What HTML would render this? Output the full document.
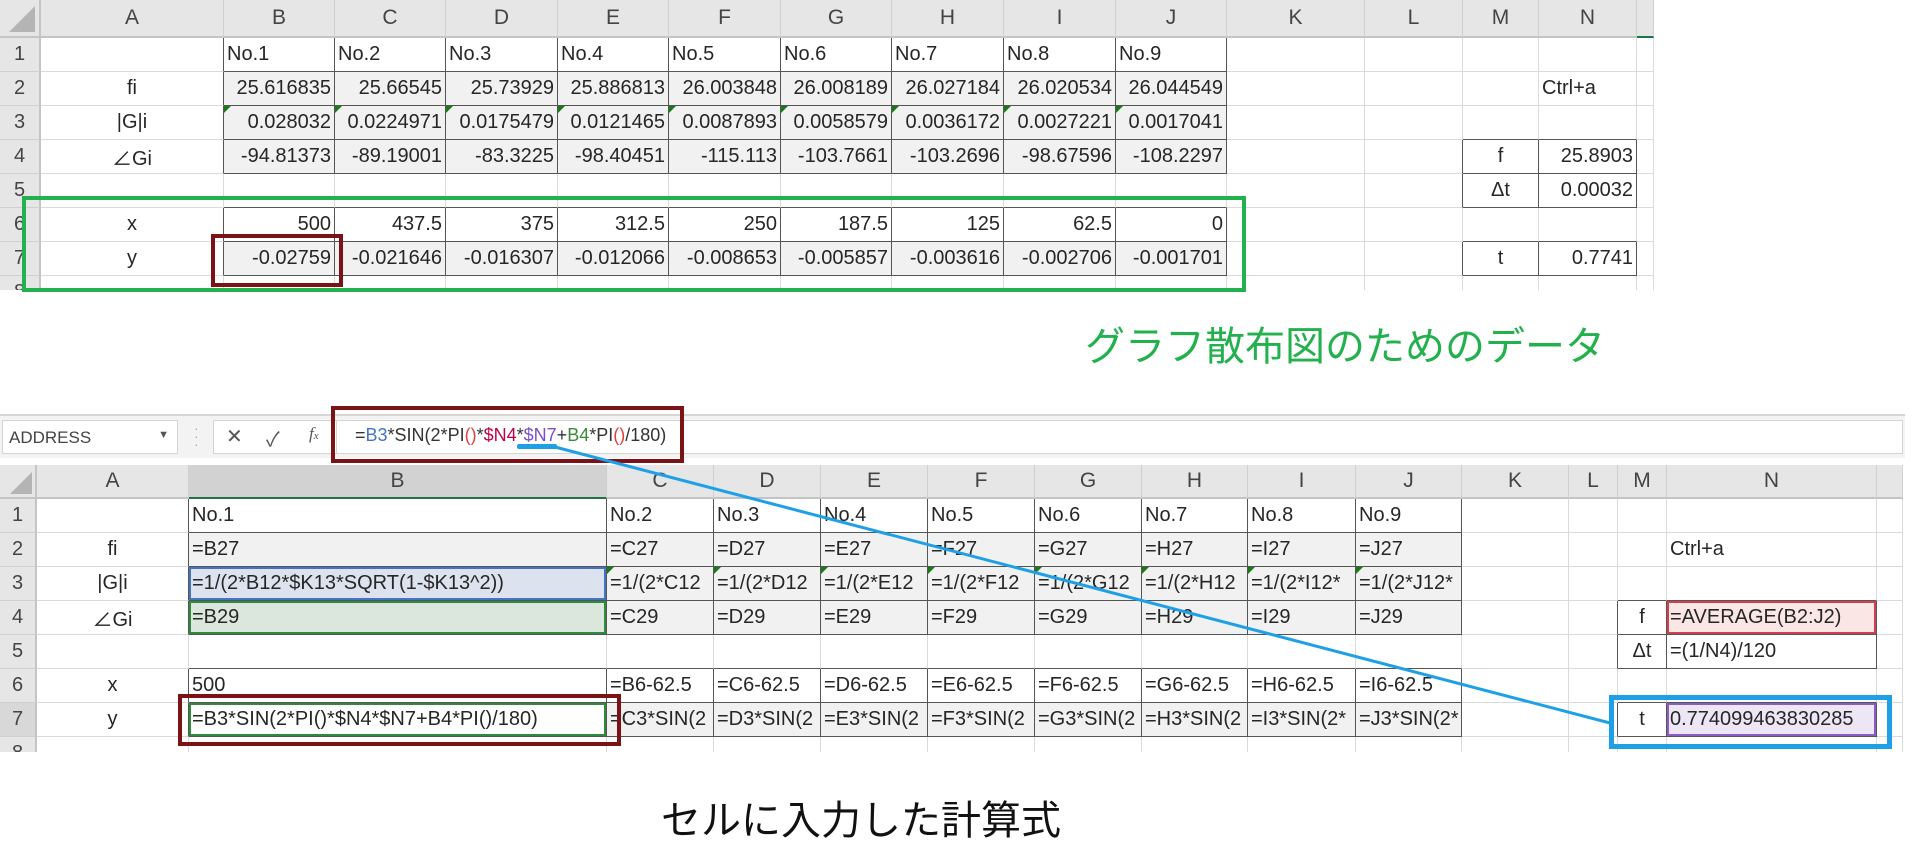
<!DOCTYPE html>
<html><head><meta charset="utf-8"><style>
*{margin:0;padding:0}
body{width:1920px;height:858px;background:#fff;position:relative;overflow:hidden;font-family:"Liberation Sans","Noto Sans CJK JP",sans-serif;color:#262626}
.g{position:absolute;left:0;overflow:hidden}
table{border-collapse:separate;border-spacing:0;table-layout:fixed}
td{box-sizing:border-box;border-right:1px solid #dadada;border-bottom:1px solid #dadada;height:34px;font-size:20px;white-space:nowrap;overflow:hidden;padding:0 3px;vertical-align:middle}
tr.h td{background:#e6e6e6;color:#444;text-align:center;border-bottom:2px solid #c4c4c4;border-right:1px solid #d0d0d0;font-size:21px}
td.n{background:#e6e6e6;color:#444;text-align:center;border-right:2px solid #c4c4c4;border-bottom:1px solid #d0d0d0;padding:0}
.r{text-align:right}.c{text-align:center}
.d{border-right:1px solid #555;border-bottom:1px solid #555}
.dr{border-right:1px solid #555}.db{border-bottom:1px solid #555}
.gy{background:#f1f1f1}
.t{position:relative}
.t:before{content:"";position:absolute;left:0;top:0;border-top:7px solid #1a7a1a;border-right:7px solid transparent}
.box{position:absolute;box-sizing:border-box}
</style></head><body>

<div class="g" style="top:0;height:290px;width:1660px">
<table style="width:1654px">
<col style="width:41px"><col style="width:183px"><col style="width:111px"><col style="width:111px"><col style="width:112px"><col style="width:111px"><col style="width:112px"><col style="width:111px"><col style="width:112px"><col style="width:112px"><col style="width:111px"><col style="width:138px"><col style="width:98px"><col style="width:76px"><col style="width:98px"><col style="width:17px">
<tr class="h" style="height:38px"><td style="height:38px;position:relative;border-right:2px solid #c4c4c4"><div style="position:absolute;right:4px;bottom:4px;border-left:26px solid transparent;border-bottom:26px solid #b4b4b4"></div></td><td>A</td><td class="db">B</td><td class="db">C</td><td class="db">D</td><td class="db">E</td><td class="db">F</td><td class="db">G</td><td class="db">H</td><td class="db">I</td><td class="db">J</td><td>K</td><td>L</td><td>M</td><td>N</td><td style="border-bottom:2px solid #217346"></td></tr>
<tr><td class="n">1</td><td class="dr"></td><td class="d">No.1</td><td class="d">No.2</td><td class="d">No.3</td><td class="d">No.4</td><td class="d">No.5</td><td class="d">No.6</td><td class="d">No.7</td><td class="d">No.8</td><td class="d">No.9</td><td></td><td></td><td></td><td></td><td></td></tr>
<tr><td class="n">2</td><td class="c dr">fi</td><td class="d r gy">25.616835</td><td class="d r gy">25.66545</td><td class="d r gy">25.73929</td><td class="d r gy">25.886813</td><td class="d r gy">26.003848</td><td class="d r gy">26.008189</td><td class="d r gy">26.027184</td><td class="d r gy">26.020534</td><td class="d r gy">26.044549</td><td></td><td></td><td></td><td>Ctrl+a</td><td></td></tr>
<tr><td class="n">3</td><td class="c dr">|G|i</td><td class="d r gy t">0.028032</td><td class="d r gy t">0.0224971</td><td class="d r gy t">0.0175479</td><td class="d r gy t">0.0121465</td><td class="d r gy t">0.0087893</td><td class="d r gy t">0.0058579</td><td class="d r gy t">0.0036172</td><td class="d r gy t">0.0027221</td><td class="d r gy t">0.0017041</td><td></td><td></td><td class="db"></td><td class="db"></td><td></td></tr>
<tr><td class="n">4</td><td class="c dr">∠Gi</td><td class="d r gy">-94.81373</td><td class="d r gy">-89.19001</td><td class="d r gy">-83.3225</td><td class="d r gy">-98.40451</td><td class="d r gy">-115.113</td><td class="d r gy">-103.7661</td><td class="d r gy">-103.2696</td><td class="d r gy">-98.67596</td><td class="d r gy">-108.2297</td><td></td><td class="dr"></td><td class="d c">f</td><td class="d r">25.8903</td><td></td></tr>
<tr><td class="n">5</td><td></td><td class="db"></td><td class="db"></td><td class="db"></td><td class="db"></td><td class="db"></td><td class="db"></td><td class="db"></td><td class="db"></td><td class="db"></td><td></td><td class="dr"></td><td class="d c">Δt</td><td class="d r">0.00032</td><td></td></tr>
<tr><td class="n">6</td><td class="c dr">x</td><td class="d r">500</td><td class="d r">437.5</td><td class="d r">375</td><td class="d r">312.5</td><td class="d r">250</td><td class="d r">187.5</td><td class="d r">125</td><td class="d r">62.5</td><td class="d r">0</td><td></td><td></td><td class="db"></td><td class="db"></td><td></td></tr>
<tr><td class="n">7</td><td class="c dr">y</td><td class="d r gy">-0.02759</td><td class="d r gy">-0.021646</td><td class="d r gy">-0.016307</td><td class="d r gy">-0.012066</td><td class="d r gy">-0.008653</td><td class="d r gy">-0.005857</td><td class="d r gy">-0.003616</td><td class="d r gy">-0.002706</td><td class="d r gy">-0.001701</td><td></td><td class="dr"></td><td class="d c">t</td><td class="d r">0.7741</td><td></td></tr>
<tr><td class="n">8</td><td></td><td></td><td></td><td></td><td></td><td></td><td></td><td></td><td></td><td></td><td></td><td></td><td></td><td></td><td></td></tr>
</table></div>
<div class="box" style="left:22px;top:196px;width:1224px;height:96px;border:4px solid #22b14c"></div>
<div class="box" style="left:211px;top:234px;width:132px;height:53px;border:4px solid #7b1216"></div>
<div style="position:absolute;left:1085px;top:314px;font-size:40px;color:#22b14c;white-space:nowrap">グラフ散布図のためのデータ</div>

<div style="position:absolute;left:0;top:414px;width:1905px;height:42px;background:#f3f3f3;border-top:2px solid #d6d6d6"></div>
<div class="box" style="left:2px;top:420px;width:176px;height:34px;background:#fff;border:1px solid #d4d4d4;font-size:17px;color:#444;padding:7px 0 0 6px">ADDRESS<span style="position:absolute;right:8px;top:8px;font-size:11px;color:#555">▼</span></div>
<div style="position:absolute;left:194px;top:424px;font-size:14px;color:#aaa;line-height:8px">·<br>·<br>·</div>
<div class="box" style="left:213px;top:420px;width:1690px;height:34px;background:#fff;border:1px solid #d4d4d4"></div>
<div style="position:absolute;left:226px;top:424px;font-size:20px;color:#555">✕</div>
<div style="position:absolute;left:266px;top:423px;font-size:20px;color:#555">✓</div>
<div style="position:absolute;left:309px;top:424px;font-size:17px;color:#555;font-style:italic;font-family:'Liberation Serif',serif">f<span style="font-size:11px">x</span></div>
<div style="position:absolute;left:336px;top:421px;width:1px;height:32px;background:#d4d4d4"></div>
<div style="position:absolute;left:355px;top:425px;font-size:18px;color:#333;white-space:nowrap">=<span style="color:#4472c4">B3</span>*SIN(2*PI<span style="color:#e04040">()</span>*<span style="color:#c0004a">$N4</span>*<span style="color:#7b4fc8">$N7</span>+<span style="color:#3a8a3a">B4</span>*PI<span style="color:#e04040">()</span>/180)</div>
<div class="box" style="left:331px;top:406px;width:353px;height:57px;border:4px solid #7b1216"></div>

<div class="g" style="top:465px;height:287px;width:1910px">
<table style="width:1903px">
<col style="width:37px"><col style="width:152px"><col style="width:418px"><col style="width:107px"><col style="width:107px"><col style="width:107px"><col style="width:107px"><col style="width:107px"><col style="width:106px"><col style="width:108px"><col style="width:106px"><col style="width:107px"><col style="width:49px"><col style="width:49px"><col style="width:210px"><col style="width:26px">
<tr class="h" style="height:34px"><td style="height:34px;position:relative;border-right:2px solid #c4c4c4"><div style="position:absolute;right:3px;bottom:3px;border-left:22px solid transparent;border-bottom:22px solid #b4b4b4"></div></td><td>A</td><td style="background:#d2d2d2;border-bottom:2px solid #217346">B</td><td class="db">C</td><td class="db">D</td><td class="db">E</td><td class="db">F</td><td class="db">G</td><td class="db">H</td><td class="db">I</td><td class="db">J</td><td>K</td><td>L</td><td>M</td><td>N</td><td></td></tr>
<tr><td class="n">1</td><td class="dr"></td><td class="d">No.1</td><td class="d">No.2</td><td class="d">No.3</td><td class="d">No.4</td><td class="d">No.5</td><td class="d">No.6</td><td class="d">No.7</td><td class="d">No.8</td><td class="d">No.9</td><td></td><td></td><td></td><td></td><td></td></tr>
<tr><td class="n">2</td><td class="c dr">fi</td><td class="d gy">=B27</td><td class="d gy">=C27</td><td class="d gy">=D27</td><td class="d gy">=E27</td><td class="d gy">=F27</td><td class="d gy">=G27</td><td class="d gy">=H27</td><td class="d gy">=I27</td><td class="d gy">=J27</td><td></td><td></td><td></td><td>Ctrl+a</td><td></td></tr>
<tr><td class="n">3</td><td class="c dr">|G|i</td><td class="d" style="background:#dde3ee;box-shadow:inset 0 0 0 2px #4472c4">=1/(2*B12*$K13*SQRT(1-$K13^2))</td><td class="d gy t">=1/(2*C12</td><td class="d gy t">=1/(2*D12</td><td class="d gy t">=1/(2*E12</td><td class="d gy t">=1/(2*F12</td><td class="d gy t">=1/(2*G12</td><td class="d gy t">=1/(2*H12</td><td class="d gy t">=1/(2*I12*</td><td class="d gy t">=1/(2*J12*</td><td></td><td></td><td class="db"></td><td class="db"></td><td></td></tr>
<tr><td class="n">4</td><td class="c dr">∠Gi</td><td class="d" style="background:#dbe6dc;box-shadow:inset 0 0 0 2px #2e8b3e">=B29</td><td class="d gy">=C29</td><td class="d gy">=D29</td><td class="d gy">=E29</td><td class="d gy">=F29</td><td class="d gy">=G29</td><td class="d gy">=H29</td><td class="d gy">=I29</td><td class="d gy">=J29</td><td></td><td class="dr"></td><td class="d c">f</td><td class="d" style="background:#fbe6e6;box-shadow:inset 0 0 0 2px #d04050">=AVERAGE(B2:J2)</td><td></td></tr>
<tr><td class="n">5</td><td></td><td class="db"></td><td class="db"></td><td class="db"></td><td class="db"></td><td class="db"></td><td class="db"></td><td class="db"></td><td class="db"></td><td class="db"></td><td></td><td class="dr"></td><td class="d c">Δt</td><td class="d">=(1/N4)/120</td><td></td></tr>
<tr><td class="n">6</td><td class="c dr">x</td><td class="d">500</td><td class="d">=B6-62.5</td><td class="d">=C6-62.5</td><td class="d">=D6-62.5</td><td class="d">=E6-62.5</td><td class="d">=F6-62.5</td><td class="d">=G6-62.5</td><td class="d">=H6-62.5</td><td class="d">=I6-62.5</td><td></td><td></td><td class="db"></td><td class="db"></td><td></td></tr>
<tr><td class="n" style="background:#d8d8d8">7</td><td class="c dr">y</td><td class="d" style="box-shadow:inset 0 0 0 2px #2e8b3e">=B3*SIN(2*PI()*$N4*$N7+B4*PI()/180)</td><td class="d gy">=C3*SIN(2</td><td class="d gy">=D3*SIN(2</td><td class="d gy">=E3*SIN(2</td><td class="d gy">=F3*SIN(2</td><td class="d gy">=G3*SIN(2</td><td class="d gy">=H3*SIN(2</td><td class="d gy">=I3*SIN(2*</td><td class="d gy">=J3*SIN(2*</td><td></td><td class="dr"></td><td class="d c">t</td><td class="d" style="background:#ede6f5;box-shadow:inset 0 0 0 2px #8a5cc8">0.774099463830285</td><td></td></tr>
<tr><td class="n">8</td><td></td><td></td><td></td><td></td><td></td><td></td><td></td><td></td><td></td><td></td><td></td><td></td><td></td><td></td><td></td></tr>
</table></div>
<div class="box" style="left:178px;top:694px;width:443px;height:52px;border:4px solid #7b1216"></div>
<div class="box" style="left:1609px;top:695px;width:283px;height:54px;border:5px solid #1ea0e6"></div>

<svg style="position:absolute;left:0;top:0" width="1920" height="858">
<rect x="517" y="444" width="40" height="5" rx="2" fill="#1ea0e6"/>
<line x1="555" y1="447" x2="1610" y2="723" stroke="#1ea0e6" stroke-width="3"/>
</svg>

<div style="position:absolute;left:661px;top:788px;font-size:40px;color:#111;white-space:nowrap">セルに入力した計算式</div>
</body></html>
